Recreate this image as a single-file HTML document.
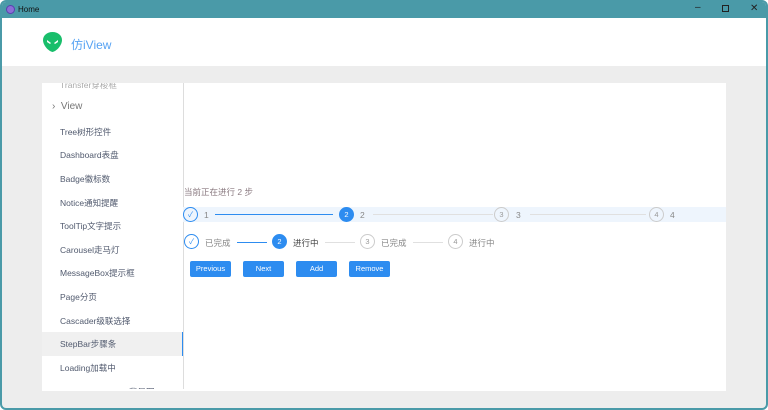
<!DOCTYPE html>
<html><head><meta charset="utf-8"><style>
*{margin:0;padding:0;box-sizing:border-box}
html,body{width:768px;height:410px;overflow:hidden;background:#fff;font-family:"Liberation Sans","Noto Sans CJK SC",sans-serif}
.win{position:absolute;left:0;top:0;width:768px;height:410px;border:2px solid #4a9aa8;border-radius:6px;overflow:hidden;background:#ededed}
.title{position:absolute;left:0;top:0;width:100%;height:16px;background:#4a9aa8;color:#111;font-size:8px}
.title .ic{position:absolute;left:4px;top:3px;width:9px;height:9px;border-radius:50%;background:#8a6fd6;border:1px solid #5a3fb0}
.title .t{position:absolute;left:16px;top:3px}
.title .b{position:absolute;top:2px;font-size:10px;color:#222}
.head{position:absolute;left:0;top:16px;width:100%;height:48px;background:#fff}
.logo{position:absolute;left:41px;top:14px}
.brand{position:absolute;left:69px;top:18px;color:#57a3f3;font-size:12px}
.panel{position:absolute;left:40px;top:81px;width:684px;height:308px;background:#fff}
.side{position:absolute;left:0;top:0;width:142px;height:306px;border-right:1px solid #ddd;overflow:hidden}
.it{position:absolute;left:0;width:141px;height:24px;font-size:8.5px;color:#515a6e;padding-left:18px;line-height:24px}
.act{background:#f0f0f0}
.act:after{content:"";position:absolute;right:-1px;top:0;width:2px;height:24px;background:#2d8cf0}
.main{position:absolute;left:141px;top:0;right:0;height:100%}
.c{position:absolute;width:15px;height:15px;border-radius:50%;border:1px solid #ccc;font-size:7.5px;color:#999;text-align:center;line-height:13px}
.c.d{border-color:#2d8cf0;color:#2d8cf0}
.c.p{background:#2d8cf0;border-color:#2d8cf0;color:#fff}
.lb{position:absolute;font-size:8.5px;color:#888}
.ln{position:absolute;height:1px;background:#e0e0e0}
.ln.b{background:#2d8cf0}
.btn{position:absolute;top:179px;height:16px;background:#2d8cf0;color:#fff;font-size:7.5px;text-align:center;line-height:16px;border-radius:2px}
</style></head><body><div class="win">
<div class="title"><div class="ic"></div><div class="t">Home</div>
<div class="b" style="left:693px;top:0">–</div><div class="b" style="left:720px;top:3px;width:7px;height:7px;border:1px solid #222"></div><div class="b" style="left:748px;top:1px">✕</div></div>
<div class="head">
<svg class="logo" width="19" height="20" viewBox="0 0 19 20"><path d="M9.5 0C4 0 0 3.5 0 8c0 5 5 11 9.5 12C14 19 19 13 19 8 19 3.5 15 0 9.5 0z" fill="#19be6b"/><path d="M4 8l4 3-1 1-3-2zM15 8l-4 3 1 1 3-2z" fill="#fff"/></svg>
<div class="brand">仿iView</div></div>
<div class="panel">
<div class="side">
<div class="it" style="top:-10px;color:#aaa">Transfer穿梭框</div>
<div class="it" style="top:12px;font-size:10px;color:#777;padding-left:10px">›&nbsp; View</div>
<div class="it" style="top:37px">Tree树形控件</div>
<div class="it" style="top:60px">Dashboard表盘</div>
<div class="it" style="top:84px">Badge徽标数</div>
<div class="it" style="top:108px">Notice通知提醒</div>
<div class="it" style="top:131px">ToolTip文字提示</div>
<div class="it" style="top:155px">Carousel走马灯</div>
<div class="it" style="top:178px">MessageBox提示框</div>
<div class="it" style="top:202px">Page分页</div>
<div class="it" style="top:226px">Cascader级联选择</div>
<div class="it act" style="top:249px">StepBar步骤条</div>
<div class="it" style="top:273px">Loading加载中</div>
<div class="it" style="top:297px">BackgroundImage背景图</div>
</div>
<div class="main">
<div class="lb" style="left:1px;top:103px;color:#8a7a80;font-size:8.5px">当前正在进行 2 步</div>
<div style="position:absolute;left:0;top:124px;width:543px;height:15px;background:#eef5fd"></div>
<div class="c d" style="left:0;top:124px">✓</div><div class="lb" style="left:21px;top:127px">1</div>
<div class="ln b" style="left:32px;top:131px;width:118px"></div>
<div class="c p" style="left:156px;top:124px">2</div><div class="lb" style="left:177px;top:127px">2</div>
<div class="ln" style="left:190px;top:131px;width:120px"></div>
<div class="c" style="left:311px;top:124px">3</div><div class="lb" style="left:333px;top:127px">3</div>
<div class="ln" style="left:347px;top:131px;width:116px"></div>
<div class="c" style="left:466px;top:124px">4</div><div class="lb" style="left:487px;top:127px">4</div>
<div class="c d" style="left:1px;top:151px">✓</div><div class="lb" style="left:22px;top:154px">已完成</div>
<div class="ln b" style="left:54px;top:159px;width:30px"></div>
<div class="c p" style="left:89px;top:151px">2</div><div class="lb" style="left:110px;top:154px;color:#444">进行中</div>
<div class="ln" style="left:142px;top:159px;width:30px"></div>
<div class="c" style="left:177px;top:151px">3</div><div class="lb" style="left:198px;top:154px">已完成</div>
<div class="ln" style="left:230px;top:159px;width:30px"></div>
<div class="c" style="left:265px;top:151px">4</div><div class="lb" style="left:286px;top:154px">进行中</div>
<div class="btn" style="left:7px;width:41px;top:178px">Previous</div>
<div class="btn" style="left:60px;width:41px;top:178px">Next</div>
<div class="btn" style="left:113px;width:41px;top:178px">Add</div>
<div class="btn" style="left:166px;width:41px;top:178px">Remove</div>
</div></div>
</div></body></html>
